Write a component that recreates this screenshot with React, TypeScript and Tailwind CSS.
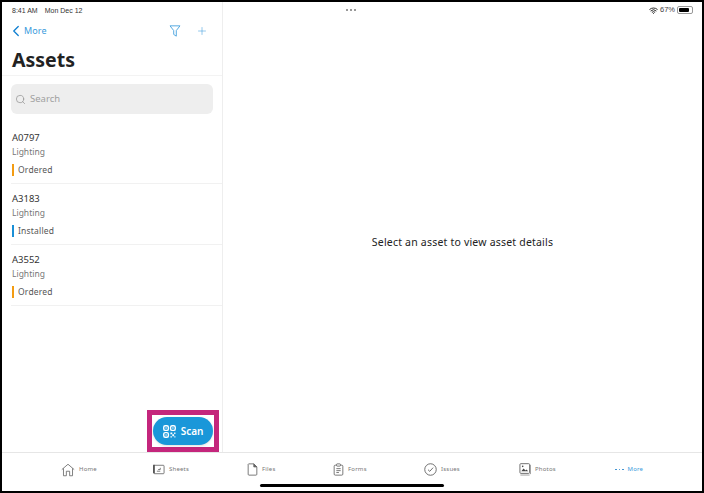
import { ChevronLeft, Plus, Search, Wifi } from 'lucide-react'

const assets = [
  { id: 'A0797', status: 'Ordered', color: 'bg-[#f39c12]' },
  { id: 'A3183', status: 'Installed', color: 'bg-[#1a8fd6]' },
  { id: 'A3552', status: 'Ordered', color: 'bg-[#f39c12]' },
]

const HomeIcon = () => (
  <svg width="14" height="14" viewBox="0 0 17 16" fill="none" stroke="#666" strokeWidth="1">
    <path d="M1 7.5 8.5 1 16 7.5" />
    <path d="M3 6v9h3.5V9.5h4V15H14V6" />
  </svg>
)

const SheetsIcon = () => (
  <svg width="12" height="11" viewBox="0 0 14 13" fill="none" stroke="#666" strokeWidth="1">
    <rect x="1" y="1.5" width="12" height="10" rx="1" />
    <path d="M1 1v10" strokeWidth="1.8" stroke="#444" />
    <path d="M6 6.5h2.5V4.5M4.5 8.5h4" />
  </svg>
)

const FilesIcon = () => (
  <svg width="11" height="13" viewBox="0 0 12 15" fill="none" stroke="#666" strokeWidth="1">
    <path d="M1.5 1h6L11 4.5V13a1 1 0 0 1-1 1H2a1 1 0 0 1-1-1V1.5z" />
    <path d="M7.5 1v3.5H11z" fill="#666" />
  </svg>
)

const FormsIcon = () => (
  <svg width="11" height="13" viewBox="0 0 12 15" fill="none" stroke="#666" strokeWidth="1">
    <rect x="1" y="2.5" width="10" height="11.5" rx="1.2" />
    <rect x="3.8" y="1" width="4.4" height="2.6" rx="0.6" fill="#fff" />
    <path d="M3.5 6.5h5M3.5 8.8h5M3.5 11h3" />
  </svg>
)

const IssuesIcon = () => (
  <svg width="13" height="13" viewBox="0 0 14 14" fill="none" stroke="#666" strokeWidth="1">
    <circle cx="7" cy="7" r="6.2" />
    <path d="M4.3 7.2 6.2 9l3.6-4" />
  </svg>
)

const PhotosIcon = () => (
  <svg width="12" height="13" viewBox="0 0 13 14" fill="none" stroke="#666" strokeWidth="1">
    <rect x="1" y="0.7" width="10.5" height="10.5" rx="1" />
    <path d="M1.5 13h10M12.5 2v10" stroke="#999" />
    <path d="M2.5 9 5 6l2 2 1-1 2 2z" fill="#444" stroke="none" />
    <circle cx="4" cy="3.6" r="0.9" fill="#444" stroke="none" />
  </svg>
)

const tabs = [
  { label: 'Home', icon: <HomeIcon />, width: 'w-[92px]' },
  { label: 'Sheets', icon: <SheetsIcon />, width: 'w-[94px]' },
  { label: 'Files', icon: <FilesIcon />, width: 'w-[86px]' },
  { label: 'Forms', icon: <FormsIcon />, width: 'w-[91px]' },
  { label: 'Issues', icon: <IssuesIcon />, width: 'w-[95px]' },
  { label: 'Photos', icon: <PhotosIcon />, width: 'w-[96px]' },
]

const QrIcon = () => (
  <svg width="13" height="13" viewBox="0 0 14 14" fill="none" stroke="#fff" strokeWidth="1.5">
    <rect x="0.8" y="0.8" width="5" height="5" rx="1.6" />
    <rect x="8.2" y="0.8" width="5" height="5" rx="1.6" />
    <rect x="0.8" y="8.2" width="5" height="5" rx="1.6" />
    <circle cx="3.3" cy="3.3" r="0.8" fill="#fff" stroke="none" />
    <circle cx="10.7" cy="3.3" r="0.8" fill="#fff" stroke="none" />
    <circle cx="3.3" cy="10.7" r="0.8" fill="#fff" stroke="none" />
    <path d="M8 8h2v2H8zM12 8h1.4v1.6H12zM10 10h2v2h-2zM8 12h1.6v1.4H8zM12.2 12h1.2v1.4h-1.2z" fill="#fff" stroke="none" />
  </svg>
)

export default function App() {
  return (
    <div className="w-[704px] h-[493px] bg-black p-[2px] overflow-hidden font-['Noto_Sans',sans-serif]">
      <div className="relative w-[700px] h-[489px] bg-white flex flex-col overflow-hidden">
        <div className="flex flex-1 min-h-0">
          <div className="relative w-[221px] shrink-0 border-r border-[#eeeeee] flex flex-col">
            <div className="h-[13px] pl-[10px] pt-[3px] flex gap-[7px] text-[7px] leading-[12px] text-[#333] font-['Liberation_Sans',sans-serif]">
              <span>8:41 AM</span>
              <span>Mon Dec 12</span>
            </div>
            <div className="h-[61px] border-b border-[#f3f3f3] shrink-0">
              <div className="flex items-center h-[24px] mt-[4px] pl-[5px] pr-[14px]">
                <ChevronLeft size={18} strokeWidth={1.7} className="text-[#0f7fd0] -mr-[1px]" />
                <span className="text-[9px] text-[#3a9bdc] tracking-[0.1px]">More</span>
                <svg className="ml-auto mr-[15px]" width="12" height="12" viewBox="0 0 13 14" fill="none" stroke="#3a9bdc" strokeWidth="1">
                  <path d="M0.7 1h11.6L8 6.5V13l-3-2V6.5z" />
                </svg>
                <Plus size={12} strokeWidth={1.1} className="text-[#3a9bdc]" />
              </div>
              <h1 className="pl-[10px] mt-[3px] text-[19.5px] leading-[28px] font-bold text-[#222]">Assets</h1>
            </div>
            <div className="mx-[9px] mt-[8px] h-[30px] rounded-[6px] bg-[#eeeeee] flex items-center pl-[4px] gap-[4px] text-[#a0a0a0]">
              <Search size={11} strokeWidth={1.4} className="text-[#888]" />
              <span className="text-[9.5px]">Search</span>
            </div>
            <div className="mt-[9px]">
              {assets.map((a) => (
                <div key={a.id} className="ml-[9px] h-[61px] border-b border-[#f1f1f1] pt-[8px]">
                  <div className="pl-[1px] text-[9.5px] leading-[14px] text-[#333]">{a.id}</div>
                  <div className="pl-[1px] text-[8.5px] leading-[13px] text-[#777]">Lighting</div>
                  <div className="mt-[6px] flex items-center gap-[4px]">
                    <span className={`ml-[1px] w-[2px] h-[12px] ${a.color}`} />
                    <span className="text-[8.5px] leading-[12px] tracking-[0.2px] text-[#555]">{a.status}</span>
                  </div>
                </div>
              ))}
            </div>
            <div className="absolute left-[145px] top-[408px] w-[72px] h-[42px] border-[5px] border-[#c4267c] bg-white flex items-center justify-center">
              <div className="w-[60px] h-[28px] rounded-full bg-[#1a97d9] flex items-center justify-center gap-[5px] shadow-sm">
                <QrIcon />
                <span className="text-[10px] font-semibold text-white">Scan</span>
              </div>
            </div>
          </div>
          <div className="flex-1 flex flex-col">
            <div className="h-[13px] relative flex items-center pl-[123px]">
              <span className="flex gap-[2px] mt-[2px]">
                <i className="w-[2px] h-[2px] rounded-full bg-[#777]" />
                <i className="w-[2px] h-[2px] rounded-full bg-[#777]" />
                <i className="w-[2px] h-[2px] rounded-full bg-[#777]" />
              </span>
              <div className="absolute right-[9px] top-[2px] flex items-center gap-[2px] text-[7.5px] leading-[12px] text-[#444] font-['Liberation_Sans',sans-serif]">
                <Wifi size={9} strokeWidth={2.5} className="text-[#222]" />
                <span>67%</span>
                <span className="w-[16px] h-[8px] rounded-[2px] border border-[#999] p-[1px] flex">
                  <span className="w-[10px] bg-black rounded-[1px]" />
                </span>
              </div>
            </div>
            <div className="flex-1 flex items-center justify-center pt-[19px]">
              <span className="text-[10.5px] text-[#222] tracking-[0.2px]">Select an asset to view asset details</span>
            </div>
          </div>
        </div>
        <div className="relative h-[39px] shrink-0 border-t border-[#e6e6e6] flex items-start pl-[59px] pt-[8px]">
          {tabs.map((t) => (
            <div key={t.label} className={`${t.width} flex items-center gap-[4px] h-[17px]`}>
              {t.icon}
              <span className="text-[6px] tracking-[0.2px] text-[#777]">{t.label}</span>
            </div>
          ))}
          <div className="flex items-center gap-[4px] h-[17px] text-[#3a9bdc]">
            <span className="flex gap-[2px]">
              <i className="w-[1.5px] h-[1.5px] rounded-full bg-[#2a86cc]" />
              <i className="w-[1.5px] h-[1.5px] rounded-full bg-[#2a86cc]" />
              <i className="w-[1.5px] h-[1.5px] rounded-full bg-[#2a86cc]" />
            </span>
            <span className="text-[6px] tracking-[0.2px]">More</span>
          </div>
          <div className="absolute left-[258px] bottom-[4px] w-[184px] h-[3px] rounded-full bg-black" />
        </div>
      </div>
    </div>
  )
}
